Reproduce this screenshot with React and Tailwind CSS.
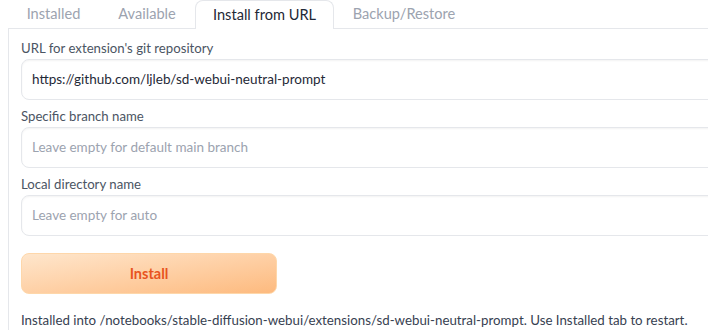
import React from 'react';

const tabs = [
  { name: 'Installed', w: 'w-[91px]' },
  { name: 'Available', w: 'w-[96px]' },
  { name: 'Install from URL', w: 'w-[139px]' },
  { name: 'Backup/Restore', w: 'w-[140px]' },
];

const Field = ({ label, value, placeholder }) => (
  <div className="flex flex-col">
    <label className="text-[13.2px] leading-[20px] text-[#4b5563] mb-[1px]">{label}</label>
    <div className="h-[41px] rounded-[8px] border border-[#e5e7eb] shadow-[inset_0_1px_2px_rgba(0,0,0,0.05)] bg-white flex items-center px-[10px] text-[13.5px]">
      {value ? (
        <span className="text-[#1f2937]">{value}</span>
      ) : (
        <span className="text-[#9ca3af]">{placeholder}</span>
      )}
    </div>
  </div>
);

export default function App() {
  return (
    <div className="w-[708px] h-[335px] overflow-hidden bg-white" style={{ fontFamily: '"Lato", "Liberation Sans", sans-serif' }}>
      {/* tab bar */}
      <div className="flex pl-[8px] h-[29px] relative z-10">
        {tabs.map((t, i) => (
          <div
            key={t.name}
            className={
              i === 2
                ? `${t.w} h-[29px] flex items-center justify-center text-[14.6px] text-[#1f2937] border border-b-0 border-[#e5e7eb] rounded-t-[8px] bg-white`
                : `${t.w} h-[28px] flex items-center justify-center text-[14.6px] text-[#9ca3af]`
            }
          >
            {t.name}
          </div>
        ))}
      </div>
      {/* panel */}
      <div className="ml-[8px] w-[730px] -mt-[1px] border-l border-t border-[#e5e7eb] pl-[12px] pt-[9px] flex flex-col gap-[6px]">
        <Field label="URL for extension's git repository" value="https://github.com/ljleb/sd-webui-neutral-prompt" />
        <Field label="Specific branch name" placeholder="Leave empty for default main branch" />
        <Field label="Local directory name" placeholder="Leave empty for auto" />
        <button className="mt-[11px] w-[256px] h-[41px] rounded-[8px] border border-[#fed7aa] bg-gradient-to-br from-[#fee6cc] to-[#fdba7e] text-[#e8541f] font-bold text-[14.5px]">
          Install
        </button>
        <div className="mt-[10px] leading-[20px] text-[13.3px] text-[#374151] whitespace-nowrap">
          Installed into /notebooks/stable-diffusion-webui/extensions/sd-webui-neutral-prompt. Use Installed tab to restart.
        </div>
      </div>
    </div>
  );
}
